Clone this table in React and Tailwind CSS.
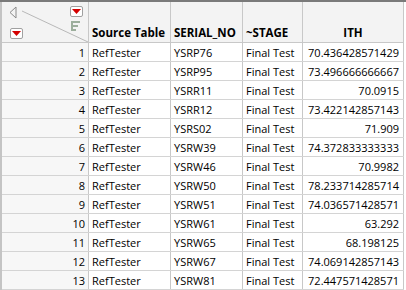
import React from "react";

const rows = [
  ["YSRP76", "70.436428571429"],
  ["YSRP95", "73.496666666667"],
  ["YSRR11", "70.0915"],
  ["YSRR12", "73.422142857143"],
  ["YSRS02", "71.909"],
  ["YSRW39", "74.372833333333"],
  ["YSRW46", "70.9982"],
  ["YSRW50", "78.233714285714"],
  ["YSRW51", "74.036571428571"],
  ["YSRW61", "63.292"],
  ["YSRW65", "68.198125"],
  ["YSRW67", "74.069142857143"],
  ["YSRW81", "72.447571428571"],
];

const RedButton = () => (
  <div className="w-[13px] h-[11px] bg-white border border-[#a0a0a0] rounded-[2px] flex items-center justify-center">
    <svg width="9" height="5" viewBox="0 0 9 5">
      <polygon points="0,0 9,0 4.5,5" fill="#d40000" />
    </svg>
  </div>
);

const Corner = () => (
  <div className="relative w-[87px] h-full border-r border-[#c8c8c8]">
    <svg className="absolute inset-0" width="87" height="40">
      <line x1="20" y1="9" x2="86" y2="40" stroke="#b8b8b8" strokeWidth="1" />
      <polyline points="14,5 8,10.5 14,16 14,5" fill="none" stroke="#8a8a8a" strokeWidth="1" />
      <g fill="#9cae9c">
        <rect x="69" y="19" width="2" height="10" />
        <rect x="71" y="19" width="7" height="2" />
        <rect x="71" y="23" width="5" height="2" />
        <rect x="71" y="27" width="3" height="2" />
      </g>
    </svg>
    <div className="absolute left-[68px] top-[4px]">
      <RedButton />
    </div>
    <div className="absolute left-[8px] top-[26px]">
      <RedButton />
    </div>
  </div>
);

export default function App() {
  const cell = "h-full border-r border-[#c8c8c8] flex items-center whitespace-nowrap";
  return (
    <div
      className="w-[406px] h-[290px] overflow-hidden bg-white text-black text-[11px] leading-none"
      style={{ fontFamily: '"Open Sans", "Noto Sans", sans-serif' }}
    >
      <div className="h-[2px] bg-[#7a7a7a]" />
      <div className="flex border-l-2 border-[#c4c4c4]">
        <div className="flex flex-col">
          {/* Header */}
          <div className="flex h-[41px] bg-[#f3f3f3] border-b border-[#c8c8c8] font-bold text-[11.5px]">
            <Corner />
            <div className={`${cell} w-[82px] items-end pb-[4px] px-[3px]`}>Source Table</div>
            <div className={`${cell} w-[72px] items-end pb-[4px] px-[3px]`}>SERIAL_NO</div>
            <div className={`${cell} w-[60px] items-end pb-[4px] px-[3px]`}>~STAGE</div>
            <div className={`${cell} w-[101px] items-end justify-center pb-[4px]`}>ITH</div>
          </div>
          {/* Rows */}
          {rows.map(([serial, ith], i) => (
            <div key={serial} className="flex h-[19px] border-b border-[#d4d4d4]">
              <div className={`${cell} w-[87px] justify-end pr-[3px] bg-[#f7f7f7] pt-[1px]`}>{i + 1}</div>
              <div className={`${cell} w-[82px] px-[3px] pt-[1px]`}>RefTester</div>
              <div className={`${cell} w-[72px] px-[3px] pt-[1px]`}>{serial}</div>
              <div className={`${cell} w-[60px] px-[3px] pt-[1px]`}>Final Test</div>
              <div className={`${cell} w-[101px] justify-end pr-[4px] pt-[1px]`}>{ith}</div>
            </div>
          ))}
        </div>
      </div>
    </div>
  );
}
